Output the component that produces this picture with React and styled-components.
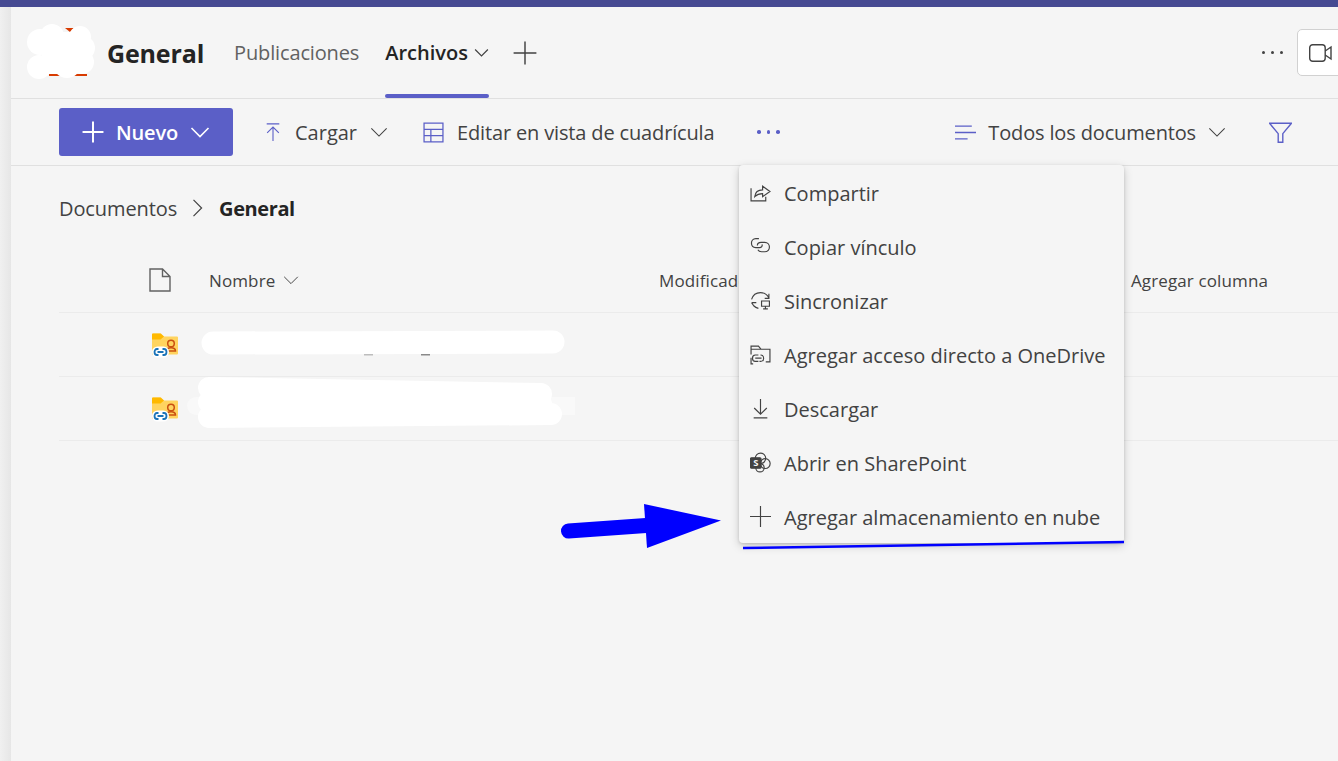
import React from 'react';
import styled, { createGlobalStyle } from 'styled-components';

const GlobalStyle = createGlobalStyle`
  html, body {
    margin: 0;
    padding: 0;
    height: 100%;
    background: #f5f5f5;
    overflow: hidden;
    font-family: "Open Sans", "Noto Sans", "Liberation Sans", sans-serif;
    color: #424242;
  }
`;

const Icon = ({ size = 20, children, color = 'currentColor', width = 1.3 }) => (
  <svg width={size} height={size} viewBox="0 0 20 20" fill="none" stroke={color} strokeWidth={width} style={{ flex: 'none' }}>
    {children}
  </svg>
);

const Chevron = ({ size = 18, color = '#424242', width = 1.2 }) => (
  <Icon size={size} color={color} width={width}>
    <path d="M1.5 6 L10 14.5 L18.5 6" />
  </Icon>
);

const Plus = ({ size = 24, color = '#424242', width = 1.2 }) => (
  <Icon size={size} color={color} width={width}>
    <path d="M10 0.5 V19.5 M0.5 10 H19.5" />
  </Icon>
);

const Page = styled.div`
  position: relative;
  width: 1338px;
  height: 761px;
  overflow: hidden;
  display: flex;
  flex-direction: column;
`;

const TopStrip = styled.div`
  height: 7px;
  background: #464a92;
  flex: none;
`;

const Body = styled.div`
  flex: 1;
  display: flex;
  min-height: 0;
`;

const Gutter = styled.div`
  width: 11px;
  flex: none;
  background: linear-gradient(to right, #f0f0f0, #e6e6e6);
`;

const Main = styled.main`
  flex: 1;
  min-width: 0;
  display: flex;
  flex-direction: column;
`;

const Header = styled.header`
  height: 91px;
  padding-left: 96px;
  display: flex;
  align-items: center;
  border-bottom: 1px solid #e0e0e0;
`;

const ChannelName = styled.h1`
  margin: 0 30px 0 0;
  font-size: 25px;
  font-weight: 700;
  letter-spacing: -0.15px;
  color: #242424;
`;

const Tab = styled.div`
  position: relative;
  height: 91px;
  display: flex;
  align-items: center;
  gap: 6px;
  margin-right: ${(p) => p.$gap}px;
  font-size: 20px;
  font-weight: ${(p) => (p.$active ? 600 : 400)};
  letter-spacing: ${(p) => (p.$active ? 0 : -0.15)}px;
  color: ${(p) => (p.$active ? '#242424' : '#616161')};

  &::after {
    content: ${(p) => (p.$active ? '""' : 'none')};
    position: absolute;
    left: 0;
    right: 0;
    bottom: 0;
    height: 4px;
    border-radius: 2px;
    background: #5b5fc7;
  }
`;

const HeaderRight = styled.div`
  margin-left: auto;
  display: flex;
  align-items: center;
  gap: 14px;
`;

const Dots = styled.span`
  display: inline-flex;
  gap: ${(p) => p.$gap}px;

  i {
    width: 3.5px;
    height: 3.5px;
    border-radius: 50%;
    background: ${(p) => p.$color};
  }
`;

const CallButton = styled.div`
  width: 60px;
  height: 47px;
  margin-right: -19px;
  box-sizing: border-box;
  background: #fff;
  border: 1px solid #d1d1d1;
  border-radius: 5px;
  display: flex;
  align-items: center;
  padding-left: 11px;
`;

const Toolbar = styled.div`
  height: 66px;
  padding-left: 48px;
  display: flex;
  align-items: center;
  border-bottom: 1px solid #e0e0e0;
  font-size: 20px;
  color: #424242;
`;

const NewButton = styled.button`
  width: 174px;
  height: 48px;
  margin-right: 31px;
  border: 0;
  border-radius: 3px;
  background: #5b5fc7;
  color: #fff;
  display: flex;
  align-items: center;
  padding: 0 0 0 23px;
  font: 600 20px "Open Sans", sans-serif;
  letter-spacing: -0.15px;

  span {
    margin: 0 12px 0 12px;
  }
`;

const ToolItem = styled.div`
  display: flex;
  align-items: center;
  gap: ${(p) => p.$gap}px;
  margin-right: ${(p) => p.$after}px;
  margin-left: ${(p) => (p.$push ? 'auto' : '0')};
  letter-spacing: ${(p) => p.$spacing || 0}px;
`;

const FilterSlot = styled.div`
  width: 23px;
  margin-right: 46px;
  display: flex;
`;

const Content = styled.div`
  flex: 1;
  padding-left: 48px;
`;

const Crumbs = styled.div`
  height: 84px;
  display: flex;
  align-items: center;
  gap: 12px;
  font-size: 20px;
  letter-spacing: -0.1px;
  color: #424242;

  b {
    font-weight: 700;
    letter-spacing: -0.4px;
    color: #242424;
  }
`;

const TableHead = styled.div`
  height: 62px;
  display: grid;
  grid-template-columns: 150px 450px 472px 1fr;
  align-items: center;
  border-bottom: 1px solid #ebebeb;
  font-size: 17px;
  letter-spacing: 0.12px;
  color: #424242;

  > * {
    position: relative;
    top: -1px;
  }
`;

const IconCell = styled.div`
  display: flex;
  padding-left: 90px;
`;

const NameCell = styled.div`
  display: flex;
  align-items: center;
  gap: 8px;
`;

const Row = styled.div`
  height: 63px;
  display: flex;
  align-items: center;
  padding-left: 92px;
  border-bottom: 1px solid #ebebeb;
`;

const Menu = styled.div`
  position: absolute;
  left: 739px;
  top: 165px;
  width: 385px;
  height: 378px;
  box-sizing: border-box;
  padding-top: 1px;
  background: #f5f5f5;
  border-radius: 4px;
  box-shadow: 0 3px 10px rgba(0, 0, 0, 0.18), 0 1px 3px rgba(0, 0, 0, 0.12);
`;

const MenuItem = styled.div`
  height: 54px;
  display: flex;
  align-items: center;
  gap: 13px;
  padding-left: 11px;
  font-size: 20px;
  color: #424242;

  svg {
    position: relative;
    top: -1px;
  }
`;

const Annotation = styled.svg`
  position: absolute;
  left: 0;
  top: 0;
  pointer-events: none;
`;

const menuItems = [
  {
    label: 'Compartir',
    icon: (
      <>
        <path d="M1 6 V18 H15 V14" />
        <path d="M4.5 14 C5 9.5 8 7.5 12 7.5 V4 L19 9 L12 14 V11 C9 11 6.5 12 4.5 14 Z" />
      </>
    ),
  },
  {
    label: 'Copiar vínculo',
    icon: (
      <>
        <path d="M8.5 2.5 H5.5 C0 2.5 0 11 5.5 11 H9 C11 11 12 9.5 11.5 8" />
        <path d="M7 9 C7 7 8.5 6 10.5 6 H14 C20 6 20 15 14 15 H11 C9 15 8 14 7.5 13" />
      </>
    ),
  },
  {
    label: 'Sincronizar',
    icon: (
      <>
        <path d="M1.5 9 C3 4 7 2.5 10 2.5 C13.5 2.5 16.5 4.5 18 7.5 M18 3.5 V8 H14" />
        <path d="M1.5 12 L3.5 15 C4.5 16 6 17 8 17.5 M1.5 12 L6 12" />
        <path d="M11 10.5 H18.5 V15.5 H11 Z M14.7 15.5 V18 M12.5 18 H17" />
      </>
    ),
  },
  {
    label: 'Agregar acceso directo a OneDrive',
    icon: (
      <>
        <path d="M1 10 V2 H8 L10.5 5 H1 M10.5 5 H19 V17 H15 M3 19 H1 V13" />
        <path d="M8 10.5 H5 C1.5 10.5 1.5 16.5 5 16.5 H8 M11 10.5 H10 C14 10.5 14 16.5 10 16.5 H9 M5 13.5 H11" />
      </>
    ),
  },
  {
    label: 'Descargar',
    icon: <path d="M10 1 V15 M4 9.5 L10 15.5 L16 9.5 M3.5 19 H16.5" />,
  },
  {
    label: 'Abrir en SharePoint',
    icon: (
      <>
        <circle cx="10" cy="6" r="5" />
        <circle cx="14.5" cy="11" r="4.7" />
        <circle cx="9.5" cy="15" r="4" />
        <rect x="0.5" y="5.5" width="10" height="10" rx="1" fill="#424242" />
        <text x="5.5" y="13.5" fontSize="9" fontWeight="700" fill="#f5f5f5" stroke="none" textAnchor="middle" fontFamily="Open Sans, sans-serif">S</text>
      </>
    ),
  },
  {
    label: 'Agregar almacenamiento en nube',
    icon: <path d="M10 0 V20 M0 10 H20" />,
  },
];

const FolderIcon = () => (
  <svg width="28" height="28" viewBox="0 0 28 28" style={{ flex: 'none' }}>
    <path d="M1 3.5 a1 1 0 0 1 1-1 H10 L13 5.5 H26 a1 1 0 0 1 1 1 V22.5 a1 1 0 0 1 -1 1 H1 Z" fill="#ffd45f" />
    <path d="M1 3.5 a1 1 0 0 1 1-1 H9.5 L13 5.5 L9.5 8.5 H1 Z" fill="#ffb900" />
    <circle cx="20" cy="12.5" r="3.3" fill="none" stroke="#ca5010" strokeWidth="1.5" />
    <path d="M15.5 20 C15.5 15.5 24.5 15.5 24.5 20 Z" fill="none" stroke="#ca5010" strokeWidth="1.5" />
    <rect x="1" y="15.5" width="17" height="11" rx="5.5" fill="#fff" />
    <path d="M7.5 18 H6 C2.7 18 2.7 24 6 24 H7.5 M11.5 18 H13 C16.3 18 16.3 24 13 24 H11.5 M6.5 21 H12.5" fill="none" stroke="#1a73b8" strokeWidth="1.8" />
  </svg>
);

export default function App() {
  return (
    <Page>
      <GlobalStyle />
      <TopStrip />
      <Body>
        <Gutter />
        <Main>
          <Header>
            <ChannelName>General</ChannelName>
            <Tab $gap={26}>Publicaciones</Tab>
            <Tab $active $gap={24}>
              Archivos
              <Chevron size={15} width={1.6} />
            </Tab>
            <Plus size={24} />
            <HeaderRight>
              <Dots $color="#424242" $gap={5.5}><i /><i /><i /></Dots>
              <CallButton>
                <svg width="24" height="18" viewBox="0 0 24 18" fill="none" stroke="#424242" strokeWidth="1.4">
                  <rect x="0.7" y="0.7" width="15.5" height="16.6" rx="3" />
                  <path d="M16.2 7 L22 3 V15 L16.2 11" />
                </svg>
              </CallButton>
            </HeaderRight>
          </Header>
          <Toolbar>
            <NewButton>
              <Plus size={22} color="#fff" width={1.8} />
              <span>Nuevo</span>
              <Chevron size={20} color="#fff" width={1.6} />
            </NewButton>
            <ToolItem $gap={13} $after={35}>
              <Icon size={18} color="#5b5fc7" width={1.2}>
                <path d="M3 1 H17 M10 20 V4.5 M3.5 11 L10 4.5 L16.5 11" />
              </Icon>
              Cargar
              <Chevron size={18} />
            </ToolItem>
            <ToolItem $gap={13} $after={43} $spacing={-0.15}>
              <Icon size={21} color="#5b5fc7" width={1.2}>
                <path d="M1 1 H19 V19 H1 Z M1 7 H19 M1 13 H19 M7.5 7 V19" />
              </Icon>
              Editar en vista de cuadrícula
            </ToolItem>
            <Dots $color="#5b5fc7" $gap={6}><i /><i /><i /></Dots>
            <ToolItem $push $gap={12} $after={43} $spacing={-0.15}>
              <Icon size={21} color="#5b5fc7" width={1.2}>
                <path d="M0 4 H16 M0 10 H20 M0 16 H12" />
              </Icon>
              Todos los documentos
              <Chevron size={18} />
            </ToolItem>
            <FilterSlot>
              <Icon size={23} color="#5b5fc7" width={1.2}>
                <path d="M0.5 2 H19.5 L12 11 V18.5 H8 V11 Z" />
              </Icon>
            </FilterSlot>
          </Toolbar>
          <Content>
            <Crumbs>
              Documentos
              <Icon size={18} color="#424242" width={1.3}>
                <path d="M5 1 L14 10 L5 19" />
              </Icon>
              <b>General</b>
            </Crumbs>
            <TableHead>
              <IconCell>
                <svg width="22" height="24" viewBox="0 0 22 24" fill="none" stroke="#616161" strokeWidth="1.4">
                  <path d="M1 1 H13.5 L21 8.5 V23 H1 Z M13.5 1 V8.5 H21" />
                </svg>
              </IconCell>
              <NameCell>
                Nombre
                <Chevron size={16} />
              </NameCell>
              <div>Modificado</div>
              <div>Agregar columna</div>
            </TableHead>
            <Row><FolderIcon /></Row>
            <Row><FolderIcon /></Row>
          </Content>
        </Main>
      </Body>

      <Annotation width="1338" height="761" viewBox="0 0 1338 761">
        <path d="M42 31 h2 v3 h-2 Z M65 28 h9 l-4 4 Z M49 74 h11 v2 h-11 Z M74 74 h13 v2 h-13 Z" fill="#d83b01" />
        <g fill="#fff">
          <circle cx="52" cy="36" r="12" />
          <circle cx="40" cy="42" r="13" />
          <circle cx="80" cy="37" r="11" />
          <circle cx="83" cy="48" r="12" />
          <circle cx="39" cy="67" r="12" />
          <circle cx="67" cy="64" r="14" />
          <circle cx="82" cy="62" r="12" />
          <rect x="42" y="32" width="34" height="42" />
        </g>
        <path d="M213 343 L553 342" stroke="#fff" strokeWidth="23" strokeLinecap="round" />
        <path d="M364 354 h9 v1.5 h-9 Z" fill="#bdbdbd" />
        <path d="M421 354 h9 v1.5 h-9 Z" fill="#8a8a8a" />
        <path d="M196 406 H575" stroke="#f9f9f9" strokeWidth="18" />
        <circle cx="196" cy="406" r="9" fill="#f9f9f9" />
        <path d="M209 388 L541 394 M209 417 L551 414 M209 402 L541 404" stroke="#fff" strokeWidth="22" strokeLinecap="round" />
        <path d="M568.5 531 L646 525.5" stroke="#0000ff" strokeWidth="15" strokeLinecap="round" />
        <path d="M644 504 L721 520.5 L647 548 Z" fill="#0000ff" />
      </Annotation>

      <Menu>
        {menuItems.map((item) => (
          <MenuItem key={item.label}>
            <Icon size={21} width={1.1}>{item.icon}</Icon>
            {item.label}
          </MenuItem>
        ))}
      </Menu>
      <Annotation width="1338" height="761" viewBox="0 0 1338 761">
        <path d="M743 548 L1124 542" stroke="#0000ff" strokeWidth="2.5" />
      </Annotation>
    </Page>
  );
}
